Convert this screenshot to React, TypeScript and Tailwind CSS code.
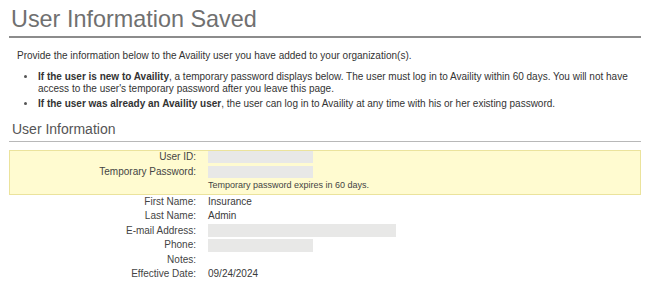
import React from "react";

const font = { fontFamily: '"Liberation Sans", Arial, sans-serif' };

function Redacted({ w, h = 12 }: { w: number; h?: number }) {
  return <div className="bg-[#e8e8e7]" style={{ width: w, height: h }} />;
}

function Row({
  label,
  children,
}: {
  label: string;
  children?: React.ReactNode;
}) {
  return (
    <div className="flex items-center h-[14.5px] text-[10px] leading-[14.5px]">
      <div className="w-[187px] shrink-0 text-right text-[#444]">{label}</div>
      <div className="ml-[12px] text-[#3a3a3a]">{children}</div>
    </div>
  );
}

export default function App() {
  return (
    <div className="bg-white w-[650px] h-[291px] overflow-hidden" style={font}>
      <div className="ml-[9px] w-[632px]">
        {/* page title */}
        <div className="pt-[7.5px] pb-[5px] border-b-2 border-[#8c8c8c]">
          <h1 className="pl-[2px] text-[23.4px] leading-[23px] text-[#707070]">
            User Information Saved
          </h1>
        </div>

        <p className="mt-[12px] pl-[8px] text-[10px] leading-[12px] text-[#333]">
          Provide the information below to the Availity user you have added to your organization(s).
        </p>

        <ul className="mt-[9px] pl-[28px] text-[10px] leading-[12px] text-[#333] list-disc marker:text-[#555]">
          <li className="pl-[1px]">
            <b>If the user is new to Availity</b>, a temporary password displays below. The user must
            log in to Availity within 60 days. You will not have access to the user's temporary
            password after you leave this page.
          </li>
          <li className="pl-[1px] mt-[3px]">
            <b>If the user was already an Availity user</b>, the user can log in to Availity at any
            time with his or her existing password.
          </li>
        </ul>

        {/* section header */}
        <div className="mt-[12px] pb-[5px] border-b border-[#b8b8b8]">
          <h2 className="pl-[3px] text-[14px] leading-[14px] text-[#555]">User Information</h2>
        </div>

        <div className="mt-[8px] border border-[#ebe39c] bg-[#fffbd0] pb-[3px]">
          <div className="flex items-center h-[12px] text-[10px] leading-[12px]">
            <div className="w-[186px] shrink-0 text-right text-[#444]">User ID:</div>
            <div className="ml-[12px]">
              <Redacted w={105} />
            </div>
          </div>
          <div className="flex items-center h-[12px] mt-[3px] text-[10px] leading-[12px]">
            <div className="w-[186px] shrink-0 text-right text-[#444]">Temporary Password:</div>
            <div className="ml-[12px]">
              <Redacted w={105} />
            </div>
          </div>
          <div className="mt-[2px] ml-[198px] text-[9px] leading-[11px] text-[#444]">
            Temporary password expires in 60 days.
          </div>
        </div>

        <Row label="First Name:">Insurance</Row>
        <Row label="Last Name:">Admin</Row>
        <Row label="E-mail Address:">
          <Redacted w={188} h={13} />
        </Row>
        <Row label="Phone:">
          <Redacted w={105} h={13} />
        </Row>
        <Row label="Notes:" />
        <Row label="Effective Date:">09/24/2024</Row>
      </div>
    </div>
  );
}
